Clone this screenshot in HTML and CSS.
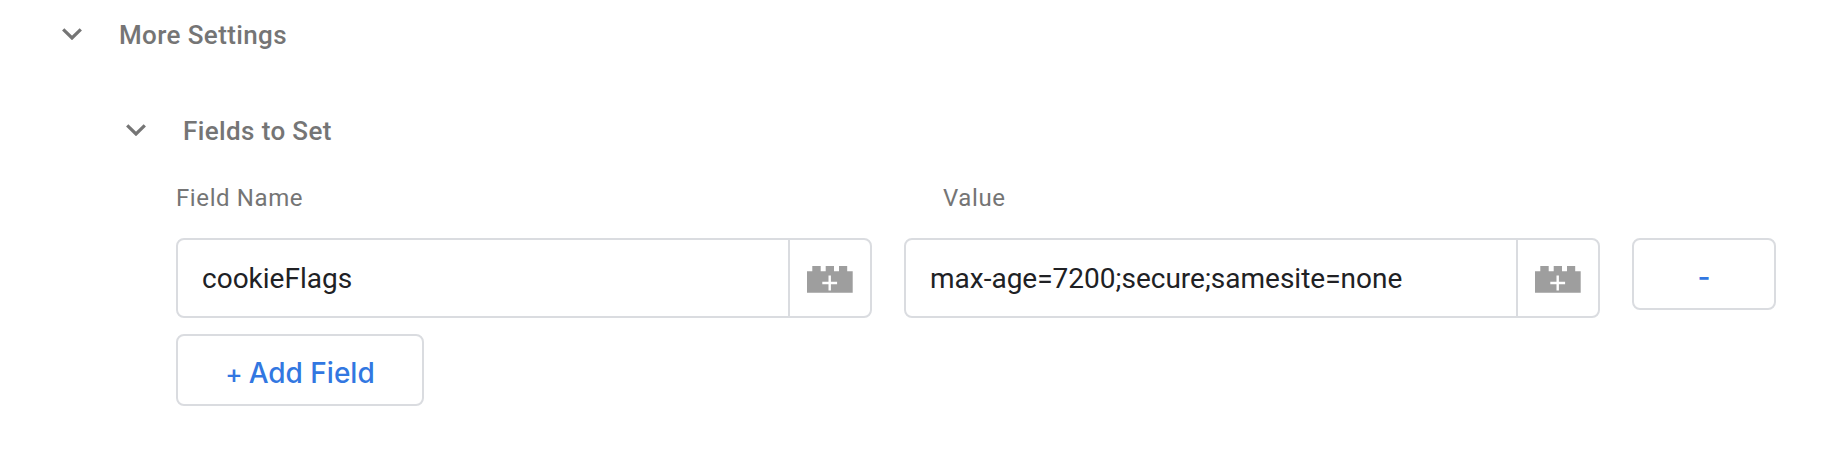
FILE: index.html
```
<!DOCTYPE html>
<html lang="en">
<head>
<meta charset="UTF-8">
<meta name="viewport" content="width=device-width, initial-scale=1.0">
<title>Fields to Set</title>
<link rel="stylesheet" href="styles.css">
</head>
<body>

<div class="settings">
    <div class="section-header">
        <svg class="chevron" width="20" height="12" viewBox="0 0 20 12"><path d="M1.2 1.4L10 10L18.8 1.4"/></svg>
        <span>More Settings</span>
    </div>
    <div class="section-header nested">
        <svg class="chevron" width="20" height="12" viewBox="0 0 20 12"><path d="M1.2 1.4L10 10L18.8 1.4"/></svg>
        <span>Fields to Set</span>
    </div>

    <div class="fields">
        <div class="labels">
            <label for="field-name">Field Name</label>
            <label for="field-value">Value</label>
        </div>
        <div class="row">
            <div class="input-group">
                <input type="text" id="field-name" value="cookieFlags">
                <button class="variable" aria-label="Insert variable">
                    <svg width="46" height="27" viewBox="0 0 46 27">
                        <path class="brick" d="M0 5.3H5.3V0H13.7V5.3H18.7V0H27V5.3H32V0H40.2V5.3H45.7V26.8H0Z"/>
                        <path class="plus" d="M15.3 17H30.1M22.7 9.5V24.5"/>
                    </svg>
                </button>
            </div>
            <div class="input-group">
                <input type="text" id="field-value" value="max-age=7200;secure;samesite=none">
                <button class="variable" aria-label="Insert variable">
                    <svg width="46" height="27" viewBox="0 0 46 27">
                        <path class="brick" d="M0 5.3H5.3V0H13.7V5.3H18.7V0H27V5.3H32V0H40.2V5.3H45.7V26.8H0Z"/>
                        <path class="plus" d="M15.3 17H30.1M22.7 9.5V24.5"/>
                    </svg>
                </button>
            </div>
            <button class="btn remove">-</button>
        </div>
        <button class="btn add"><span class="sign">+</span>Add Field</button>
    </div>
</div>

</body>
</html>
```
FILE: styles.css
```
* {
    box-sizing: border-box;
}

body {
    margin: 0;
    background: #fff;
    font-family: Roboto, sans-serif;
}

.settings {
    padding: 15px 46px 0 62px;
}

.section-header {
    display: flex;
    align-items: center;
    gap: 37px;
    height: 40px;
    color: #757575;
    font-size: 26px;
    font-weight: 500;
    letter-spacing: 0.38px;
}

.section-header.nested {
    margin: 56px 0 0 64px;
}

.chevron {
    margin-top: -2px;
    fill: none;
    stroke: #757575;
    stroke-width: 3.2;
}

.fields {
    margin-left: 114px;
}

.labels {
    display: flex;
    margin-top: 32px;
    height: 30px;
    line-height: 30px;
    color: #757575;
    font-size: 24px;
    letter-spacing: 0.6px;
}

.labels label:first-child {
    width: 767px;
}

.row {
    display: flex;
    align-items: flex-start;
    gap: 32px;
    margin: 25px 0 16px;
}

.input-group {
    display: flex;
    width: 696px;
    height: 80px;
    border: 2px solid #dadce0;
    border-radius: 8px;
}

.input-group input {
    flex: 1;
    min-width: 0;
    padding: 0 24px;
    border: none;
    outline: none;
    background: none;
    color: #202124;
    font-family: inherit;
    font-size: 28px;
}

.variable {
    display: flex;
    align-items: center;
    width: 82px;
    padding: 2px 0 0 17px;
    border: none;
    border-left: 2px solid #dadce0;
    background: none;
}

.brick {
    fill: #9e9e9e;
}

.plus {
    fill: none;
    stroke: #fff;
    stroke-width: 2.4;
}

.btn {
    height: 72px;
    padding: 5px 6px 0;
    border: 2px solid #dadce0;
    border-radius: 8px;
    background: #fff;
    color: #3277e1;
    font-family: Inter, sans-serif;
    font-size: 28px;
    font-weight: 500;
    cursor: pointer;
}

.remove {
    width: 144px;
}

.add {
    display: flex;
    align-items: center;
    justify-content: center;
    gap: 6px;
    width: 248px;
}

.sign {
    padding-top: 2px;
    font-size: 26px;
    line-height: 1;
}
```
